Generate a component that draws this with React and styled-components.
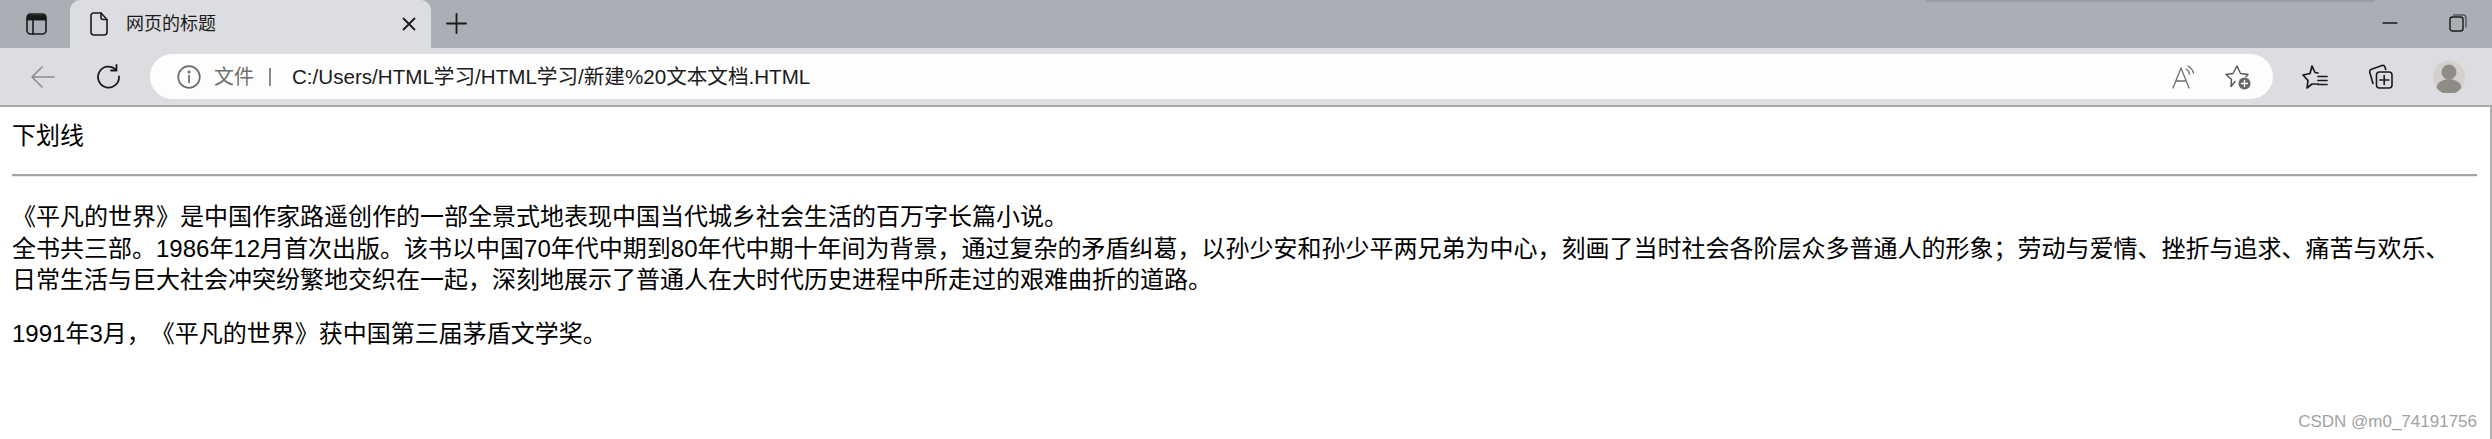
import React from "react";
import styled, { createGlobalStyle } from "styled-components";

const Global = createGlobalStyle`
  html, body { margin: 0; padding: 0; background: #fff; }
  #root { width: 2492px; height: 439px; overflow: hidden; }
`;
const CJK = `"Liberation Sans", "Noto Sans CJK SC", sans-serif`;

const Win = styled.div`
  position: relative; width: 2492px; height: 439px; display: flex; flex-direction: column;
  font-family: ${CJK}; color: #000; overflow: hidden; text-spacing-trim: space-all;
`;
const TabStrip = styled.div`
  position: relative; height: 48px; flex: none; display: flex; align-items: flex-start;
  background: #aaaeb5;
`;
const ShadowBar = styled.div`
  position: absolute; left: 1926px; top: 0; width: 449px; height: 2px; background: #9a9ea4;
`;
const SideBtn = styled.div`
  width: 70px; height: 48px; flex: none; display: flex; align-items: center; justify-content: center;
  svg { margin-left: 2px; margin-top: -1px; }
`;
const Tab = styled.div`
  width: 361px; height: 48px; flex: none; box-sizing: border-box; padding: 0 15px 0 20px;
  display: flex; align-items: center; background: #dcdde1; border-radius: 10px 10px 0 0;
`;
const TabTitle = styled.span`
  flex: 1; margin-left: 18px; font-size: 18px; color: #1a1a1a; line-height: 24px;
`;
const NewTab = styled.div`
  width: 50px; margin-left: 0; height: 46px; flex: none; display: flex; align-items: center; justify-content: center;
`;
const Spacer = styled.div`flex: 1;`;
const WinBtn = styled.div`
  width: 68px; height: 46px; flex: none; display: flex; align-items: center; justify-content: center;
`;
const Toolbar = styled.div`
  height: 57px; flex: none; box-sizing: border-box; padding: 6px 0; display: flex; align-items: center;
  background: #dcdde1;
`;
const NavIcon = styled.div`
  flex: none; width: ${p => p.$w}px; height: 45px; display: flex; align-items: center; justify-content: center;
`;
const Address = styled.div`
  flex: none; width: 2123px; height: 45px; box-sizing: border-box; margin-left: 18px; padding: 0 21px 0 27px;
  background: #fdfdfd; border-radius: 23px; display: flex; align-items: center;
`;
const FileLabel = styled.span`
  margin-left: 13px; font-size: 20px; color: #6f6f6f; line-height: 26px;
`;
const Sep = styled.span`
  width: 2px; height: 18px; margin: 0 21px 0 15px; background: #8a8a8a;
`;
const Url = styled.span`
  flex: 1; font-size: 20.6px; color: #1b1b1b; line-height: 26px; white-space: nowrap;
`;
const Right = styled.div`
  display: flex; align-items: center; gap: 28px;
`;
const Tools = styled.div`
  display: flex; align-items: center; flex: none; padding-left: 29px; gap: 40px;
`;
const Rule = styled.div`height: 2px; flex: none; background: #a9a9ad;`;
const Page = styled.main`
  flex: 1; box-sizing: border-box; padding: 13px 0 0 12px; background: #fff;
  border-right: 2px solid #b0b0b0; font-size: 24px; line-height: 32px;
`;
const Line = styled.div`height: 32px;`;
const Hr = styled.hr`
  margin: 22px 13px 25px 0; border: 0; height: 2px;
  background: #a4a4a4; box-shadow: 0 1px 0 #ececec;
`;
const Para = styled.p`
  margin: 0 0 22px; line-height: 31.5px; white-space: nowrap;
`;
const Mark = styled.div`
  position: absolute; right: 15px; bottom: 8px; font-size: 17px; line-height: 18px;
  color: #a2a2a2; letter-spacing: 0;
`;

const I = ({ w, h, vb, children, c = "#1a1a1a", sw = 1.6 }) => (
  <svg width={w} height={h} viewBox={vb || `0 0 ${w} ${h}`} fill="none" stroke={c} strokeWidth={sw} strokeLinecap="round" strokeLinejoin="round">{children}</svg>
);

export default function App() {
  return (
    <Win lang="zh-CN">
      <Global />
      <TabStrip>
        <ShadowBar />
        <SideBtn>
          <I w={21} h={22}>
            <rect x="1" y="1" width="19" height="20" rx="3.5" />
            <path d="M1 6.5h19M7 6.5V21" />
            <path d="M2 2.5h17v4H2z" fill="#1a1a1a" />
          </I>
        </SideBtn>
        <Tab>
          <I w={18} h={24}>
            <path d="M3.5 1H11l6 6.5V20a3 3 0 0 1-3 3H4a3 3 0 0 1-3-3V3.500a2.500 2.500 0 0 1 2.500-2.500z" />
            <path d="M11 1v4.500a2 2 0 0 0 2 2h4" />
          </I>
          <TabTitle>网页的标题</TabTitle>
          <I w={14} h={14} sw={1.8}><path d="M1.500 1.500l11 11M12.500 1.500l-11 11" /></I>
        </Tab>
        <NewTab>
          <I w={21} h={21} sw={1.8}><path d="M10.500 1v19M1 10.500h19" /></I>
        </NewTab>
        <Spacer />
        <WinBtn>
          <I w={16} h={2} sw={1.4}><path d="M1 1h14" /></I>
        </WinBtn>
        <WinBtn>
          <I w={18} h={18} sw={1.4}>
            <rect x="1" y="3" width="13" height="14" rx="2.500" />
            <path d="M4.500 1H14a3 3 0 0 1 3 3v9" stroke="#555" />
          </I>
        </WinBtn>
      </TabStrip>
      <Toolbar>
        <NavIcon $w={84}>
          <I w={25} h={24} c="#8b8d90" sw={1.6}><path d="M24 12H2M12 2L2 12l10 10" /></I>
        </NavIcon>
        <NavIcon $w={48}>
          <I w={25} h={25} sw={1.8}>
            <path d="M19.800 5.500A10.500 10.500 0 1 0 23 12.500" />
            <path d="M20.500 1v5.500H15" />
          </I>
        </NavIcon>
        <Address>
          <I w={24} h={24} c="#6d6d6d" sw={1.7}>
            <circle cx="12" cy="12" r="10.800" />
            <path d="M12 10.500v7" />
            <circle cx="12" cy="7" r="0.700" fill="#6d6d6d" />
          </I>
          <FileLabel>文件</FileLabel>
          <Sep />
          <Url>C:/Users/HTML学习/HTML学习/新建%20文本文档.HTML</Url>
          <Right>
            <I w={25} h={24} c="#6f6f6f" sw={1.3}>
              <path d="M1 23L9 3l8 20M3.800 16h10.400" />
              <path d="M14 4c2 1 3 2.500 3.500 5M16 1c2.800 1.500 4.500 3.500 5.500 7" />
            </I>
            <I w={27} h={26} c="#555" sw={1.4}>
              <path d="M10 17.500L6 22.500l.5-7L1 10.500l7-1L12 2l3.500 7.500 7.500 1-2 2" />
              <circle cx="19.500" cy="19.500" r="6" fill="#666" stroke="none" />
              <path d="M19.500 16.500v6M16.500 19.500h6" stroke="#fff" />
            </I>
          </Right>
        </Address>
        <Tools>
          <I w={26} h={25} sw={1.7}>
            <path d="M16 9L13 8.500 10 2 8 9.500 1 11l5 5.500L5 24l5-4h6" />
            <path d="M16 12.500h9M16 16.500h9M16 20.500h9" />
          </I>
          <I w={25} h={25} sw={1.6}>
            <path d="M5 19.500L1.800 8.500a2.500 2.500 0 0 1 1.700-3.200L14 1.500a2.500 2.500 0 0 1 3 1.500l.7 2.500" />
            <rect x="8.500" y="8" width="15.500" height="16" rx="3" />
            <path d="M16.200 11.500v9M11.800 16h9" />
          </I>
          <I w={32} h={33} vb="0 0 32 33" sw={0}>
            <circle cx="16" cy="16.500" r="16" fill="#d3d1cc" stroke="none" />
            <circle cx="16" cy="12" r="7.500" fill="#8f8c88" stroke="none" />
            <path d="M3.500 28a12.500 9 0 0 1 25 0a16 16 0 0 1-25 0z" fill="#8f8c88" stroke="none" />
          </I>
        </Tools>
      </Toolbar>
      <Rule />
      <Page>
        <Line>下划线</Line>
        <Hr />
        <Para>
          《平凡的世界》是中国作家路遥创作的一部全景式地表现中国当代城乡社会生活的百万字长篇小说。<br />
          全书共三部。1986年12月首次出版。该书以中国70年代中期到80年代中期十年间为背景，通过复杂的矛盾纠葛，以孙少安和孙少平两兄弟为中心，刻画了当时社会各阶层众多普通人的形象；劳动与爱情、挫折与追求、痛苦与欢乐、<br />
          日常生活与巨大社会冲突纷繁地交织在一起，深刻地展示了普通人在大时代历史进程中所走过的艰难曲折的道路。
        </Para>
        <Para>1991年3月，《平凡的世界》获中国第三届茅盾文学奖。</Para>
      </Page>
      <Mark>CSDN @m0_74191756</Mark>
    </Win>
  );
}
